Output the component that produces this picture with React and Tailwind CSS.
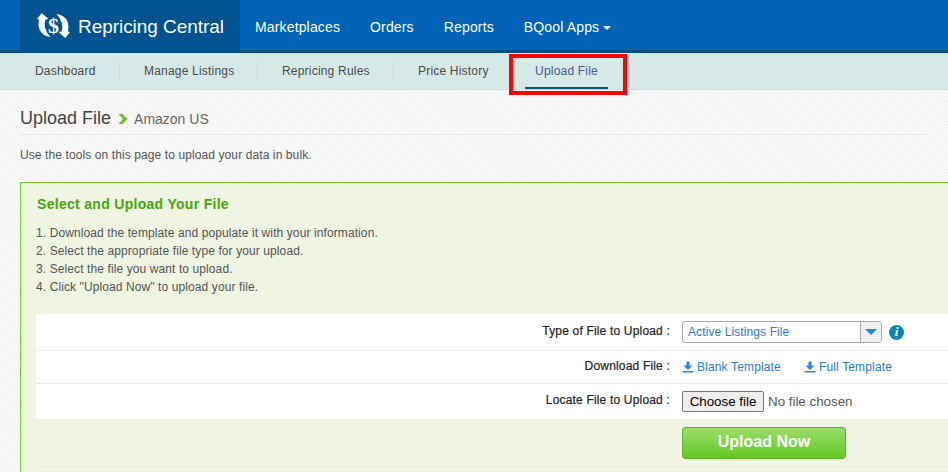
import React from "react";

const mainLinks = ["Marketplaces", "Orders", "Reports"];
const subLinks = [
  { label: "Dashboard", width: "w-[100px]" },
  { label: "Manage Listings", width: "w-[138px]" },
  { label: "Repricing Rules", width: "w-[136px]" },
  { label: "Price History", width: "w-[116px]" },
];
const steps = [
  "Download the template and populate it with your information.",
  "Select the appropriate file type for your upload.",
  "Select the file you want to upload.",
  'Click "Upload Now" to upload your file.',
];

function Logo() {
  return (
    <svg width="33" height="25" viewBox="0 0 33 25" className="shrink-0">
      <path d="M4.700 0 L11.500 6 L8.500 6.500 Q7 10 8 14.500 Q9.500 20 13.500 24 Q5.500 23 2.500 16.500 Q0.800 11.500 2 6.500 L0 6 Z" fill="#fff" />
      <path d="M28.300 25 L21.500 19 L24.500 18.500 Q26 15 25 10.500 Q23.500 5 19.500 1 Q27.500 2 30.500 8.500 Q32.200 13.500 31 18.500 L33 19 Z" fill="#fff" />
      <text x="16.500" y="19.500" textAnchor="middle" fill="#fff" fontSize="22" fontWeight="700" fontFamily="'Liberation Serif', serif">$</text>
    </svg>
  );
}

function DownloadIcon() {
  return (
    <svg width="12" height="12" viewBox="0 0 12 12" className="shrink-0">
      <path d="M4.500 0.500 H7.500 V4.500 H10.500 L6 9 L1.500 4.500 H4.500 Z" fill="#2a86d8" />
      <rect x="0.500" y="10" width="11" height="1.500" fill="#2a86d8" />
    </svg>
  );
}

function Row({ label, className, children }) {
  return (
    <div className={`flex items-center bg-white border-b border-[#ebebeb] ${className}`}>
      <div className="w-[646px] shrink-0 pr-[12px] pb-[3px] text-right text-[12px] tracking-[0.18px] text-[#222] [-webkit-text-stroke:0.2px_#222]">
        {label}
      </div>
      <div className="flex items-center">{children}</div>
    </div>
  );
}

export default function App() {
  return (
    <div className="relative w-[948px] h-[472px] overflow-hidden bg-[repeating-linear-gradient(45deg,#f8f8f8_0,#f8f8f8_1px,#f5f5f5_1px,#f5f5f5_2px)] font-['Liberation_Sans',Arial,sans-serif]">
      <header className="flex h-[53px] pl-[20px] bg-[#0063b6] border-b-[3px] border-[#004f8c]">
        <div className="flex items-center w-[220px] pl-[17px] gap-[8px] bg-[#00538f]">
          <Logo />
          <span className="pt-[4px] text-[19px] tracking-[-0.05px] text-white whitespace-nowrap">Repricing Central</span>
        </div>
        <nav className="flex items-center pl-[15px] pt-[4px] gap-[30px] text-[14px] tracking-[0.15px] text-white">
          {mainLinks.map((link) => (
            <a key={link}>{link}</a>
          ))}
          <a className="flex items-center gap-[4px]">
            BQool Apps
            <span className="w-0 h-0 mt-[2px] border-x-[4px] border-x-transparent border-t-[4px] border-t-white" />
          </a>
        </nav>
      </header>

      <div className="flex h-[37px] pl-[20px] bg-[#d7e9e6] border-b border-[#c5e0da] text-[12px] tracking-[0.2px] text-[#4a4a4a]">
        {subLinks.map((link, i) => (
          <div key={link.label} className={`flex items-center ${link.width}`}>
            <a className={`flex-1 ${i === 0 ? "pl-[15px]" : "pl-[24px]"}`}>{link.label}</a>
            <span className={`w-px h-[20px] ${i === 3 ? "bg-transparent" : "bg-[#bfe3da]"}`} />
          </div>
        ))}
        <div className="relative flex items-center justify-center w-[112px] text-[#3b5a94]">
          <a className="pl-[6px] pr-[5px]">Upload File</a>
          <span className="absolute left-[15px] w-[83px] bottom-[0px] h-[2px] bg-[#00538f]" />
          <span className="absolute right-[0px] w-px h-[20px] bg-[#bfe3da]" />
        </div>
      </div>

      <main className="px-[20px]">
        <div className="flex items-baseline h-[45px] pt-[15px] border-b border-[#e6e6e6]">
          <h1 className="text-[18px] text-[#444]">Upload File</h1>
          <svg width="10" height="10" viewBox="0 0 10 10" className="ml-[7px] mr-[6px]">
            <path d="M0.500 0 H4.500 L9.500 5 L4.500 10 H0.500 L5 5 Z" fill="#6fbf1f" />
          </svg>
          <span className="text-[14px] text-[#666]">Amazon US</span>
        </div>

        <p className="mt-[11px] text-[12px] tracking-[0.1px] text-[#555]">Use the tools on this page to upload your data in bulk.</p>

        <section className="w-[960px] h-[320px] mt-[18px] bg-[#eff4e3] border border-[#76c72f] pt-[11px] pl-[15px]">
          <h2 className="pl-[1px] text-[14px] tracking-[0.3px] font-bold text-[#46a80a]">Select and Upload Your File</h2>
          <ol className="mt-[9px] text-[12px] leading-[18px] tracking-[0.1px] text-[#555]">
            {steps.map((step, i) => (
              <li key={step}>{i + 1}. {step}</li>
            ))}
          </ol>

          <div className="mt-[18px]">
            <Row label="Type of File to Upload :" className="h-[37px]">
              <div className="flex items-center w-[200px] h-[22px] bg-white border border-[#aaa] rounded-[3px] overflow-hidden">
                <span className="flex-1 pl-[5px] text-[12px] tracking-[0.1px] text-[#2a7ad0]">Active Listings File</span>
                <span className="flex items-center justify-center w-[21px] h-full bg-[#eef0f0] border-l border-[#aaa]">
                  <span className="w-0 h-0 border-x-[6px] border-x-transparent border-t-[6px] border-t-[#2a86d8]" />
                </span>
              </div>
              <span className="flex items-center justify-center w-[15px] h-[15px] ml-[7px] rounded-full bg-[#0b86ad] font-['Liberation_Serif',serif] italic font-bold text-[13px] text-white">i</span>
            </Row>
            <Row label="Download File :" className="h-[33px]">
              <a className="flex items-center gap-[3px] text-[12px] tracking-[0.15px] text-[#2a7ad0]">
                <DownloadIcon />
                Blank Template
              </a>
              <a className="flex items-center gap-[3px] ml-[23px] text-[12px] tracking-[0.15px] text-[#2a7ad0]">
                <DownloadIcon />
                Full Template
              </a>
            </Row>
            <Row label="Locate File to Upload :" className="h-[35px] border-b-0">
              <button className="h-[21px] w-[82px] bg-[#efefef] border border-[#767676] rounded-[2px] text-[13.330px] text-black">Choose file</button>
              <span className="ml-[4px] text-[13.330px] text-[#555]">No file chosen</span>
            </Row>
          </div>

          <div className="pl-[646px] pt-[8px]">
            <button className="w-[164px] h-[32px] pb-[2px] rounded-[3px] border border-[#5fb52a] bg-gradient-to-b from-[#9ade68] to-[#62c81c] text-[16px] font-bold text-white">
              Upload Now
            </button>
          </div>
          <div className="h-px mt-[7px] bg-[#e6ebda]" />
        </section>
      </main>

      <div className="absolute left-[509px] top-[54px] w-[118px] h-[41px] border-[4px] border-[#ff0000]" />
    </div>
  );
}
